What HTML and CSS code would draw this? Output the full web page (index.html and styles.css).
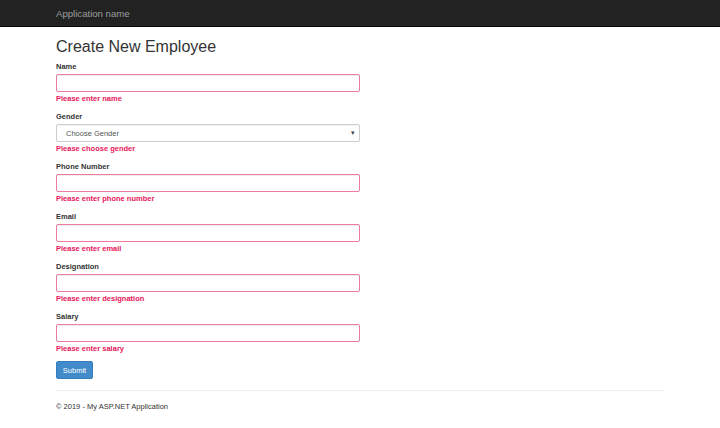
FILE: index.html
```html
<!DOCTYPE html>
<html>
<head>
<meta charset="utf-8">
<link rel="stylesheet" href="styles.css">
</head>
<body>
<div class="navbar"><div class="container"><span class="brand">Application name</span></div></div>
<div class="container body">
  <h2 class="title">Create New Employee</h2>
  <form class="form">
    <div class="group">
      <label class="label">Name</label>
      <input class="input invalid" type="text">
      <div class="error">Please enter name</div>
    </div>
    <div class="group">
      <label class="label">Gender</label>
      <div class="select"><span>Choose Gender</span><span class="arrow">&#9662;</span></div>
      <div class="error">Please choose gender</div>
    </div>
    <div class="group">
      <label class="label">Phone Number</label>
      <input class="input invalid" type="text">
      <div class="error">Please enter phone number</div>
    </div>
    <div class="group">
      <label class="label">Email</label>
      <input class="input invalid" type="text">
      <div class="error">Please enter email</div>
    </div>
    <div class="group">
      <label class="label">Designation</label>
      <input class="input invalid" type="text">
      <div class="error">Please enter designation</div>
    </div>
    <div class="group">
      <label class="label">Salary</label>
      <input class="input invalid" type="text">
      <div class="error">Please enter salary</div>
    </div>
    <button class="btn" type="button">Submit</button>
  </form>
  <hr class="rule">
  <footer class="footer">&copy; 2019 - My ASP.NET Application</footer>
</div>
</body>
</html>
```
FILE: styles.css
```css
html, body { margin: 0; padding: 0; background: #fff; }
body { font-family: "Liberation Sans", Arial, sans-serif; color: #333; }
.container { margin-left: 56px; width: 608px; }
.navbar { height: 27px; background: #222; border-bottom: 1px solid #080808; box-sizing: border-box; }
.navbar .container { height: 26px; display: flex; align-items: center; }
.brand { color: #9d9d9d; font-size: 9.6px; }
.title { margin: 10px 0 0; font-size: 16px; font-weight: 400; line-height: 20px; color: #333; }
.form { display: flex; flex-direction: column; align-items: flex-start; margin-top: 4px; }
.group { display: flex; flex-direction: column; margin-bottom: 7px; width: 304px; }
.label { font-size: 7.5px; font-weight: 700; line-height: 11px; margin-bottom: 2px; color: #333; }
.input { box-sizing: border-box; height: 18px; width: 304px; margin: 0; border: 1px solid #ccc; border-radius: 2px; box-shadow: inset 0 1px 1px rgba(0,0,0,.075); padding: 0 6px; font-size: 8px; }
.input.invalid { border-color: #ef7aa0; }
.select { box-sizing: border-box; height: 18px; width: 304px; border: 1px solid #ccc; border-radius: 2px; display: flex; align-items: center; justify-content: space-between; padding: 0 4px 0 9px; font-size: 7.5px; color: #555; box-shadow: inset 0 1px 1px rgba(0,0,0,.05); }
.arrow { font-size: 7px; color: #444; }
.error { color: #e8155a; font-size: 7.5px; font-weight: 700; line-height: 11px; margin-top: 1px; }
.btn { margin-top: 0; height: 18px; width: 37px; padding: 0; border: 1px solid #357ebd; border-radius: 2px; background: #428bca; color: #fff; font-family: "Liberation Sans", Arial, sans-serif; font-size: 7.5px; }
.rule { margin: 11px 0 0; border: 0; border-top: 1px solid #eee; }
.footer { font-size: 7.5px; color: #333; margin-top: 11px; }
```
